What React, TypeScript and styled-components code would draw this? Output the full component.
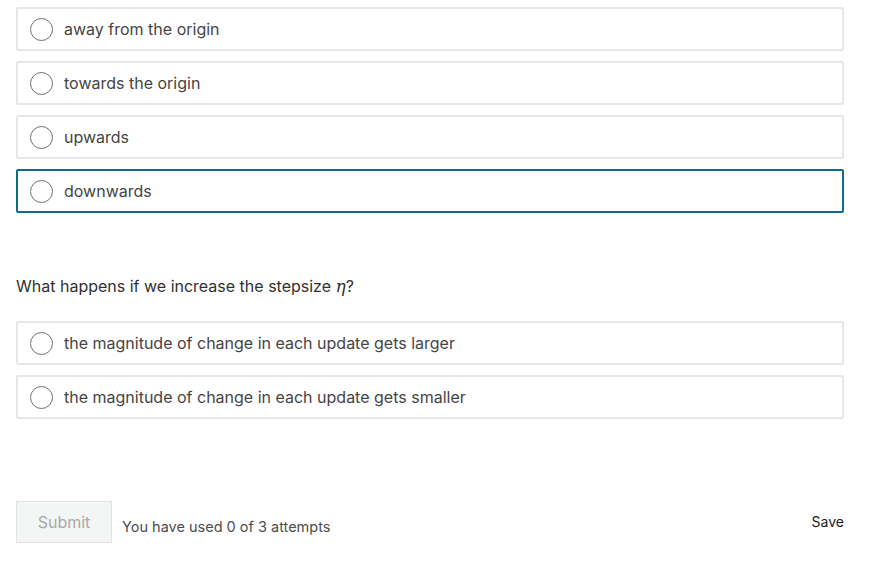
import { FC } from "react";
import styled, { createGlobalStyle } from "styled-components";

const GlobalStyle = createGlobalStyle`
  html, body {
    margin: 0;
    padding: 0;
    background: #fff;
  }
  body {
    font-family: Inter, "Open Sans", sans-serif;
    color: #454545;
  }
`;

const Page = styled.div`
  width: 828px;
  padding: 7px 0 0 16px;
`;

const Options = styled.div`
  display: flex;
  flex-direction: column;
  gap: 10px;
`;

const Option = styled.label<{ $focused?: boolean }>`
  box-sizing: border-box;
  display: flex;
  align-items: center;
  gap: 11px;
  height: 44px;
  padding: 0 11px 0 12px;
  border: 2px solid ${(p) => (p.$focused ? "#0e6b8c" : "#e7e7e7")};
  border-radius: 2px;
  font-size: 16px;
  color: #454545;
`;

const Radio = styled.span`
  box-sizing: border-box;
  width: 23px;
  height: 23px;
  border-radius: 50%;
  border: 1px solid #707070;
  flex-shrink: 0;
`;

const Question = styled.p`
  margin: 61px 0 23px;
  font-size: 16px;
  line-height: 24px;
  color: #313131;
`;

const Eta = styled.span`
  font-family: "DejaVu Serif", "Liberation Serif", serif;
  font-style: italic;
  font-size: 17px;
`;

const ActionBar = styled.div`
  display: flex;
  align-items: center;
  margin-top: 82px;
`;

const SubmitButton = styled.button`
  box-sizing: border-box;
  width: 96px;
  height: 42px;
  background: #f4f5f5;
  border: 1px solid #e3e3e3;
  border-radius: 0;
  color: #a9a9a9;
  font-family: Inter, "Open Sans", sans-serif;
  font-size: 16px;
`;

const Attempts = styled.span`
  margin: 9px 0 0 10px;
  font-size: 14.5px;
  color: #4d4d4d;
`;

const SaveButton = styled.button`
  margin-left: auto;
  background: none;
  border: none;
  padding: 0;
  font-family: Inter, "Open Sans", sans-serif;
  font-size: 14px;
  color: #1a1a1a;
  margin-top: -1px;
`;

const first = ["away from the origin", "towards the origin", "upwards", "downwards"];
const second = [
  "the magnitude of change in each update gets larger",
  "the magnitude of change in each update gets smaller",
];

const App: FC = () => {
  return (
    <Page>
      <GlobalStyle />
      <Options>
        {first.map((t, i) => (
          <Option key={t} $focused={i === 3}>
            <Radio />
            {t}
          </Option>
        ))}
      </Options>
      <Question>
        What happens if we increase the stepsize <Eta>η</Eta>?
      </Question>
      <Options>
        {second.map((t) => (
          <Option key={t}>
            <Radio />
            {t}
          </Option>
        ))}
      </Options>
      <ActionBar>
        <SubmitButton>Submit</SubmitButton>
        <Attempts>You have used 0 of 3 attempts</Attempts>
        <SaveButton>Save</SaveButton>
      </ActionBar>
    </Page>
  );
};

export default App;
